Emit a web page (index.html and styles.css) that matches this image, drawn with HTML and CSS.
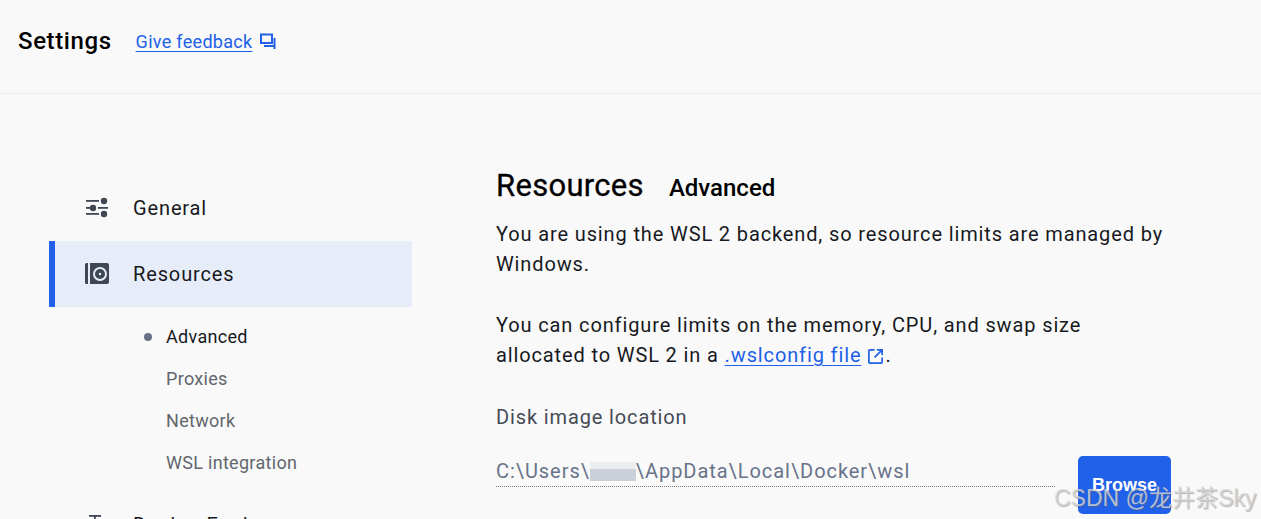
FILE: index.html
```html
<!DOCTYPE html>
<html lang="en">
<head>
  <meta charset="UTF-8">
  <title>Settings</title>
  <link rel="stylesheet" href="styles.css">
</head>
<body>

<header class="topbar">
  <h1>Settings</h1>
  <a class="link feedback" href="#">Give feedback</a>
  <svg class="feedback-icon" width="18" height="18" viewBox="0 0 18 18" fill="none" stroke="currentColor" stroke-width="2">
    <path d="M2 2.500h11v8.500H2z"/>
    <path d="M5 14h10.500V6M15.500 13v4"/>
  </svg>
</header>

<div class="layout">
  <nav class="sidebar">
    <a class="nav-item" href="#">
      <svg class="nav-icon" width="26" height="26" viewBox="0 0 26 26" fill="#3f4654">
        <rect x="3" y="5" width="13" height="1.800"/>
        <circle cx="21" cy="6" r="3.200"/>
        <rect x="3" y="12" width="4" height="1.800"/>
        <circle cx="10" cy="13" r="3.200"/>
        <rect x="15" y="12" width="10" height="1.800"/>
        <rect x="3" y="18" width="13" height="1.800"/>
        <circle cx="21" cy="19" r="3.200"/>
      </svg>
      General
    </a>
    <a class="nav-item active" href="#">
      <svg class="nav-icon" width="26" height="26" viewBox="0 0 26 26" fill="#3f4654">
        <path d="M2 3.500A1.500 1.500 0 0 1 3.500 2H5v21H3.500A1.500 1.500 0 0 1 2 21.500z"/>
        <path fill-rule="evenodd" d="M7 2h17a2 2 0 0 1 2 2v17a2 2 0 0 1-2 2H7zm10 4a7 7 0 1 0 0 14a7 7 0 0 0 0-14zm0 2a5 5 0 1 1 0 10a5 5 0 0 1 0-10zm0 3.700a1.300 1.300 0 1 0 0 2.600a1.300 1.300 0 0 0 0-2.600z"/>
      </svg>
      Resources
    </a>
    <ul class="subnav">
      <li class="current">Advanced</li>
      <li>Proxies</li>
      <li>Network</li>
      <li>WSL integration</li>
    </ul>
    <a class="nav-item" href="#">
      <svg class="nav-icon" width="26" height="26" viewBox="0 0 26 26" fill="#3f4654">
        <rect x="6" y="3" width="12" height="1.800"/>
        <rect x="11" y="3" width="1.800" height="20"/>
      </svg>
      Docker Engine
    </a>
  </nav>

  <main class="content">
    <div class="title-row">
      <h2>Resources</h2>
      <h3>Advanced</h3>
    </div>
    <p>You are using the WSL 2 backend, so resource limits are managed by Windows.</p>
    <p>You can configure limits on the memory, CPU, and swap size allocated to WSL 2 in a <a class="link" href="#">.wslconfig file</a><svg class="ext-icon" width="17" height="17" viewBox="0 0 18 18" fill="none" stroke="currentColor" stroke-width="1.800">
        <path d="M8 2H3a1 1 0 0 0-1 1v12a1 1 0 0 0 1 1h12a1 1 0 0 0 1-1v-5"/>
        <path d="M10.500 2H16v5.500M16 2L8 10"/>
      </svg>.</p>
    <div class="field-label">Disk image location</div>
    <div class="field-row">
      <div class="path-input">C:\Users\<span class="blurred"></span>\AppData\Local\Docker\wsl</div>
      <button class="browse">Browse</button>
    </div>
  </main>
</div>

<div class="watermark">CSDN @龙井茶Sky</div>

</body>
</html>
```

FILE: styles.css
```css
html, body {
  height: 519px;
  overflow: hidden;
}
body {
  margin: 0;
  background: #f9f9f9;
  color: #17191e;
  font-family: Roboto, "Noto Sans CJK SC", sans-serif;
  font-size: 20px;
  letter-spacing: 0.87px;
}
.link {
  color: #2160e8;
  text-decoration: underline;
  text-underline-offset: 3px;
  text-decoration-thickness: 1px;
}

.topbar {
  display: flex;
  align-items: center;
  height: 82px;
  padding: 0 0 11px 18px;
  border-bottom: 1px solid #eceded;
}
.topbar h1 {
  margin: 0 24px 0 0;
  font-size: 24px;
  font-weight: 500;
  letter-spacing: 0.6px;
  color: #000;
}
.feedback {
  font-size: 18px;
  letter-spacing: 0.3px;
}
.feedback-icon {
  margin-left: 6px;
  color: #2160e8;
}

.layout {
  display: flex;
  padding: 80px 0 0 49px;
}
.sidebar {
  width: 363px;
  flex: none;
  padding-top: 1px;
}
.nav-item {
  display: flex;
  align-items: center;
  gap: 24px;
  height: 66px;
  padding-left: 28px;
  border-left: 6px solid transparent;
  color: #17191e;
  text-decoration: none;
}
.nav-item.active {
  background: #e6edf9;
  border-left-color: #2160e8;
}
.subnav {
  list-style: none;
  margin: 0;
  padding: 9px 0 8px 117px;
  font-size: 18px;
  letter-spacing: 0.3px;
  color: #62666d;
}
.subnav li {
  position: relative;
  height: 42px;
  line-height: 42px;
}
.subnav .current {
  color: #17191e;
}
.subnav .current::before {
  content: "";
  position: absolute;
  left: -22px;
  top: 17px;
  width: 8px;
  height: 8px;
  border-radius: 50%;
  background: #677085;
}

.content {
  margin-left: 84px;
  width: 675px;
}
.title-row {
  display: flex;
  align-items: baseline;
  gap: 25px;
  height: 46px;
  margin-top: -1px;
  color: #000;
}
.title-row h2 {
  margin: 0;
  font-size: 31px;
  font-weight: 400;
  letter-spacing: 0.3px;
  -webkit-text-stroke: 0.3px #000;
  line-height: 26px;
}
.title-row h3 {
  margin: 0;
  font-size: 24px;
  font-weight: 500;
  letter-spacing: 0;
}
.content p {
  margin: 0 0 31px;
  line-height: 30px;
}
.ext-icon {
  margin: 0 1px 0 6px;
  vertical-align: -3px;
  color: #2160e8;
}
.field-label {
  color: #464b55;
  line-height: 30px;
  padding-top: 1px;
}
.field-row {
  display: flex;
  align-items: flex-start;
  margin-top: 24px;
}
.path-input {
  width: 559px;
  height: 30px;
  line-height: 30px;
  margin-right: 23px;
  letter-spacing: 0.95px;
  color: #68738a;
  border-bottom: 1px dotted #777;
  white-space: nowrap;
}
.blurred {
  display: inline-block;
  width: 46px;
  height: 19px;
  vertical-align: -3px;
  background: linear-gradient(#eceef1 38%, #cbcfd8 38%);
}
.browse {
  width: 93px;
  height: 58px;
  border: none;
  border-radius: 5px;
  background: #2160e8;
  color: #fff;
  font-family: "Liberation Sans", sans-serif;
  font-size: 18px;
  font-weight: 700;
}

.watermark {
  position: absolute;
  left: 1054px;
  top: 479px;
  font-family: "Liberation Sans", "Noto Sans CJK SC", sans-serif;
  font-size: 23px;
  letter-spacing: 0;
  color: rgba(215, 215, 215, 0.8);
  text-shadow: 1px 1px 1px rgba(110, 110, 110, 0.5);
  white-space: nowrap;
}
```
